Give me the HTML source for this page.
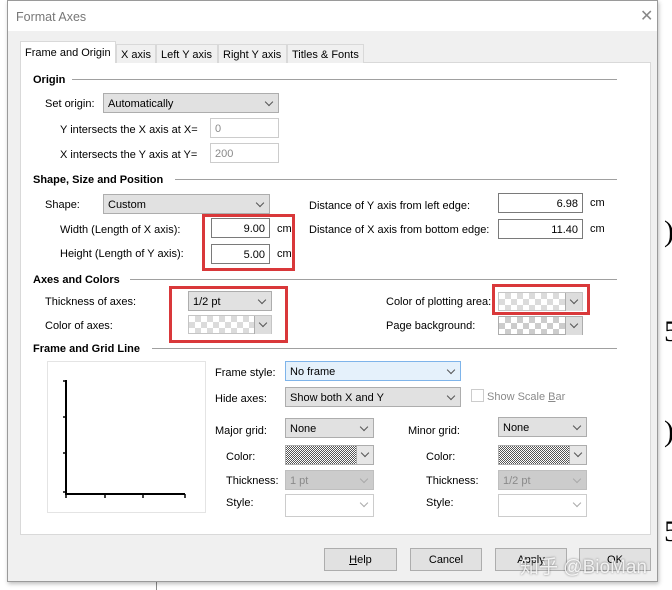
<!DOCTYPE html>
<html><head><meta charset="utf-8"><style>
*{margin:0;padding:0;box-sizing:border-box}
body{width:672px;height:590px;position:relative;background:#fff;font-family:"Liberation Sans","Noto Sans CJK SC",sans-serif;font-size:11px;color:#000;overflow:hidden}
.a{position:absolute;white-space:nowrap}
.t{margin-top:2px}
.dlg{left:7px;top:0;width:651px;height:582px;background:#f0f0f0;border:1px solid #9a9a9a;box-shadow:1px 2px 4px rgba(0,0,0,.25)}
.title{left:8px;top:1px;width:649px;height:30px;background:#fff}
.panel{left:20px;top:62px;width:631px;height:473px;background:#fff;border:1px solid #d9d9d9}
.tab{top:44px;height:19px;border:1px solid #d9d9d9;border-bottom:none;background:#f0f0f0;padding:4px 4px 0;font-size:11px}
.h{font-weight:bold;font-size:11px}
.ln{height:1px;background:#a0a0a0}
.sel{height:20px;background:#e1e1e1;border:1px solid #adadad;padding:4px 4px 0}
.sel:after{content:"";position:absolute;right:6px;top:5px;width:5px;height:5px;border-right:1px solid #555;border-bottom:1px solid #555;transform:rotate(45deg)}
.dis{background:#cccccc;border-color:#bfbfbf;color:#8a8a8a}
.dis:after{border-color:#aaa}
.wh{background:#fff;border-color:#ccc}
.wh:after{border-color:#aaa}
.inp{height:20px;background:#fff;border:1px solid #7a7a7a;padding:4px 4px 0;text-align:right}
.inpd{height:20px;background:#fff;border:1px solid #ccc;padding:4px 4px 0;color:#8a8a8a}
.red{border:3px solid #d9383a}
.chk{background-color:#fff;background-image:linear-gradient(45deg,#ccc 25%,transparent 25%,transparent 75%,#ccc 75%),linear-gradient(45deg,#ccc 25%,transparent 25%,transparent 75%,#ccc 75%);background-size:12px 12px;background-position:0 0,6px 6px;border:1px solid #adadad}
.dk{background-color:#fff;background-image:linear-gradient(45deg,#555 25%,transparent 25%,transparent 75%,#555 75%),linear-gradient(45deg,#555 25%,transparent 25%,transparent 75%,#555 75%);background-size:2px 2px;background-position:0 0,1px 1px;border:1px solid #adadad}
.dd{width:17px;height:18px;background:#ddd;border-left:1px solid #adadad}
.dd:after{content:"";position:absolute;left:5px;top:4px;width:5px;height:5px;border-right:1px solid #555;border-bottom:1px solid #555;transform:rotate(45deg)}
.btn{top:548px;height:23px;background:#e1e1e1;border:1px solid #adadad;text-align:center;padding-top:5px}
.big{font-family:"Liberation Serif",serif;font-size:30px;color:#000}
</style></head><body>
<div class="a big" style="left:664px;top:215px">)</div>
<div class="a big" style="left:664px;top:315px">5</div>
<div class="a big" style="left:664px;top:415px">)</div>
<div class="a big" style="left:664px;top:515px">5</div>
<div class="a" style="left:156px;top:582px;width:1px;height:8px;background:#888"></div>
<div class="a dlg"></div>
<div class="a title"></div>
<div class="a" style="left:16px;top:10px;font-size:12.5px;color:#777">Format Axes</div>
<div class="a" style="left:640px;top:6px;font-size:16px;color:#888">✕</div>
<div class="a panel"></div>
<div class="a tab" style="left:20px;top:41px;height:22px;width:96px;background:#fff;z-index:2;padding-top:5px">Frame and Origin</div>
<div class="a tab" style="left:116px;width:40px">X axis</div>
<div class="a tab" style="left:156px;width:62px">Left Y axis</div>
<div class="a tab" style="left:218px;width:69px">Right Y axis</div>
<div class="a tab" style="left:287px;width:77px">Titles &amp; Fonts</div>

<div class="a h t" style="left:33px;top:72px">Origin</div>
<div class="a ln" style="left:72px;top:79px;width:545px"></div>
<div class="a t" style="left:45px;top:96px">Set origin:</div>
<div class="a sel" style="left:103px;top:93px;width:176px">Automatically</div>
<div class="a t" style="left:60px;top:122px">Y intersects the X axis at X=</div>
<div class="a inpd" style="left:210px;top:118px;width:69px">0</div>
<div class="a t" style="left:60px;top:147px">X intersects the Y axis at Y=</div>
<div class="a inpd" style="left:210px;top:143px;width:69px">200</div>

<div class="a h t" style="left:33px;top:172px">Shape, Size and Position</div>
<div class="a ln" style="left:175px;top:179px;width:442px"></div>
<div class="a t" style="left:45px;top:197px">Shape:</div>
<div class="a sel" style="left:103px;top:194px;width:167px">Custom</div>
<div class="a t" style="left:60px;top:222px">Width (Length of X axis):</div>
<div class="a inp" style="left:211px;top:218px;width:59px">9.00</div>
<div class="a t" style="left:277px;top:221px">cm</div>
<div class="a t" style="left:60px;top:246px">Height (Length of Y axis):</div>
<div class="a inp" style="left:211px;top:244px;width:59px">5.00</div>
<div class="a t" style="left:277px;top:246px">cm</div>
<div class="a red" style="left:202px;top:214px;width:93px;height:57px"></div>
<div class="a t" style="left:309px;top:198px">Distance of Y axis from left edge:</div>
<div class="a inp" style="left:498px;top:193px;width:85px">6.98</div>
<div class="a t" style="left:590px;top:195px">cm</div>
<div class="a t" style="left:309px;top:222px">Distance of X axis from bottom edge:</div>
<div class="a inp" style="left:498px;top:219px;width:85px">11.40</div>
<div class="a t" style="left:590px;top:221px">cm</div>

<div class="a h t" style="left:33px;top:272px">Axes and Colors</div>
<div class="a ln" style="left:130px;top:279px;width:487px"></div>
<div class="a t" style="left:45px;top:294px">Thickness of axes:</div>
<div class="a sel" style="left:188px;top:291px;width:84px">1/2 pt</div>
<div class="a t" style="left:45px;top:318px">Color of axes:</div>
<div class="a chk" style="left:188px;top:315px;width:84px;height:19px;opacity:.7"></div>
<div class="a dd" style="left:254px;top:316px"></div>
<div class="a red" style="left:169px;top:286px;width:119px;height:57px"></div>
<div class="a t" style="left:386px;top:294px">Color of plotting area:</div>
<div class="a chk" style="left:498px;top:292px;width:85px;height:19px;opacity:.7"></div>
<div class="a dd" style="left:565px;top:293px"></div>
<div class="a red" style="left:492px;top:284px;width:98px;height:31px"></div>
<div class="a t" style="left:386px;top:318px">Page background:</div>
<div class="a chk" style="left:498px;top:316px;width:85px;height:19px"></div>
<div class="a dd" style="left:565px;top:317px"></div>

<div class="a h t" style="left:33px;top:341px">Frame and Grid Line</div>
<div class="a ln" style="left:152px;top:348px;width:465px"></div>
<div class="a" style="left:47px;top:361px;width:159px;height:152px;border:1px solid #e4e4e4;background:#fff"></div>
<svg class="a" style="left:0;top:0" width="672" height="590"><g stroke="#000" stroke-width="2" fill="none"><path d="M66 380V494H185"/><path d="M63 381H66M63 417H66M63 453H66M63 492H66M66 494V498M105 494V498M143 494V498M185 494V498" stroke-width="1.5"/></g></svg>
<div class="a t" style="left:215px;top:365px">Frame style:</div>
<div class="a sel" style="left:285px;top:361px;width:176px;background:#e5f1fb;border-color:#7eb4ea">No frame</div>
<div class="a t" style="left:215px;top:391px">Hide axes:</div>
<div class="a sel" style="left:285px;top:387px;width:176px">Show both X and Y</div>
<div class="a" style="left:471px;top:389px;width:13px;height:13px;border:1px solid #ccc;background:#fff"></div>
<div class="a t" style="left:487px;top:389px;color:#8a8a8a">Show Scale <u>B</u>ar</div>
<div class="a t" style="left:215px;top:423px">Major grid:</div>
<div class="a sel" style="left:285px;top:418px;width:89px">None</div>
<div class="a t" style="left:226px;top:449px">Color:</div>
<div class="a dk" style="left:285px;top:445px;width:89px;height:20px"></div>
<div class="a dd" style="left:356px;top:446px;background:#e6e6e6"></div>
<div class="a t" style="left:226px;top:473px">Thickness:</div>
<div class="a sel dis" style="left:285px;top:470px;width:89px">1 pt</div>
<div class="a t" style="left:226px;top:495px">Style:</div>
<div class="a sel wh" style="left:285px;top:494px;width:89px;height:23px"></div>
<div class="a t" style="left:408px;top:423px">Minor grid:</div>
<div class="a sel" style="left:498px;top:417px;width:89px">None</div>
<div class="a t" style="left:426px;top:449px">Color:</div>
<div class="a dk" style="left:498px;top:445px;width:89px;height:20px"></div>
<div class="a dd" style="left:569px;top:446px;background:#e6e6e6"></div>
<div class="a t" style="left:426px;top:473px">Thickness:</div>
<div class="a sel dis" style="left:498px;top:470px;width:89px">1/2 pt</div>
<div class="a t" style="left:426px;top:495px">Style:</div>
<div class="a sel wh" style="left:498px;top:494px;width:89px;height:23px"></div>

<div class="a btn" style="left:324px;width:73px"><u>H</u>elp</div>
<div class="a btn" style="left:410px;width:72px">Cancel</div>
<div class="a btn" style="left:495px;width:72px">Apply</div>
<div class="a btn" style="left:579px;width:72px">OK</div>
<div class="a" style="left:520px;top:552px;font-size:19px;color:rgba(255,255,255,.85);text-shadow:0 0 2px rgba(0,0,0,.5)">知乎 @BioMan</div>
</body></html>
